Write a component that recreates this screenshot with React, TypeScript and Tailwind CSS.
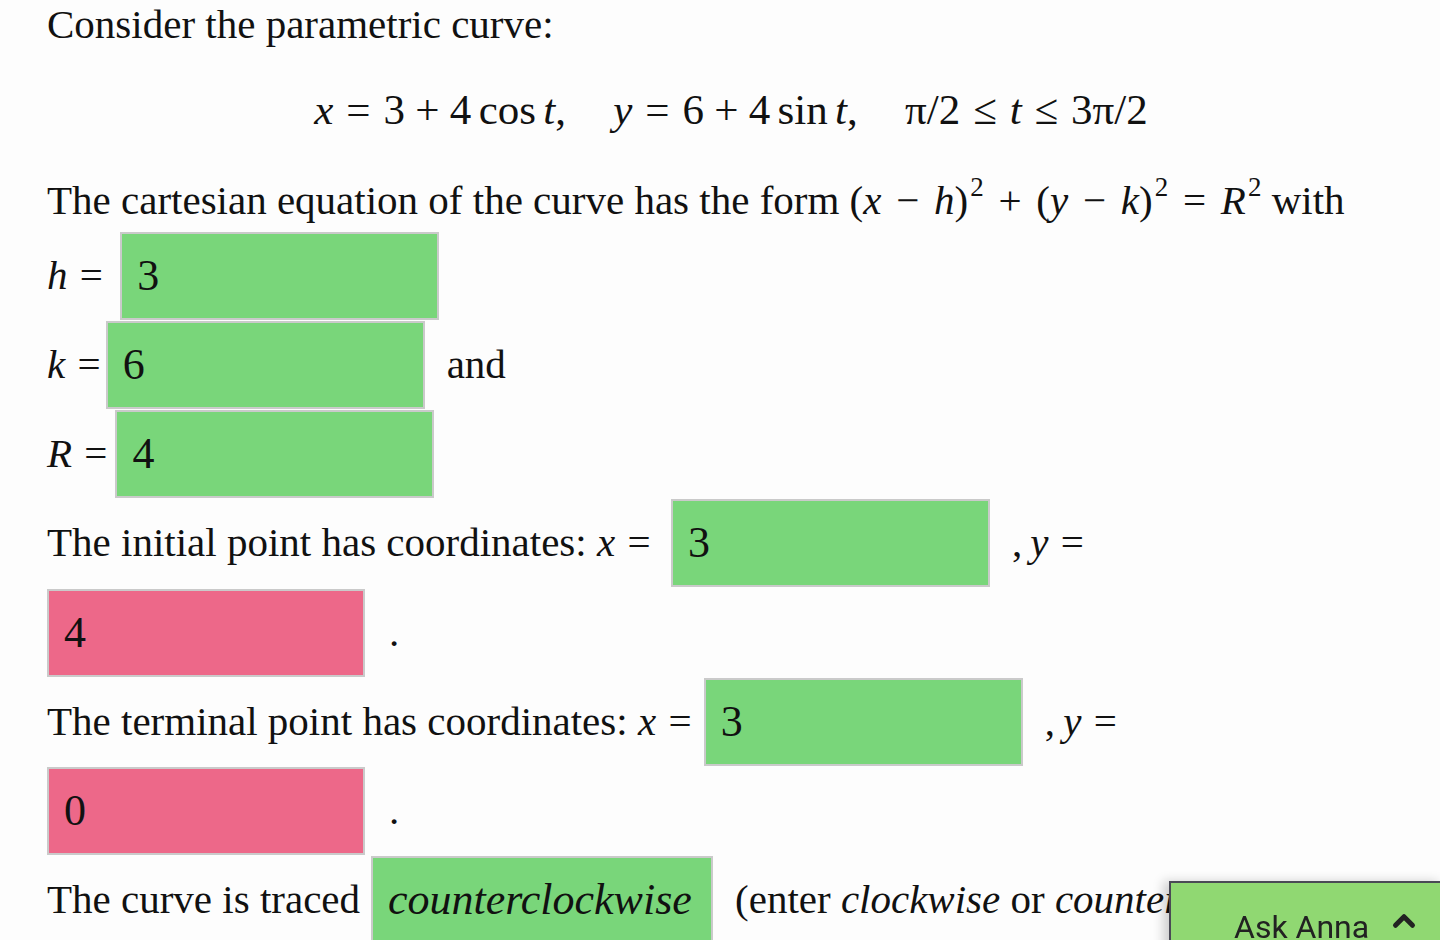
import { ChevronUp } from "lucide-react";

type Tone = "ok" | "bad";

function AnswerBox({ value, tone, italic, className = "" }: { value: string; tone: Tone; italic?: boolean; className?: string }) {
  const bg = tone === "ok" ? "bg-[#79d67a]" : "bg-[#ed6889]";
  return (
    <div
      className={`flex h-[88px] shrink-0 items-center border-2 border-[#cacaca] pl-[15px] text-[#111] ${bg} ${italic ? "text-[44px] italic" : "text-[44px]"} ${className}`}
    >
      {value}
    </div>
  );
}

// math variable
function V({ children }: { children: React.ReactNode }) {
  return <span className="italic">{children}</span>;
}

function Eq() {
  return <span className="mx-[0.3em]">=</span>;
}

function Op({ children }: { children: React.ReactNode }) {
  return <span className="mx-[0.24em]">{children}</span>;
}

function WideOp({ children }: { children: React.ReactNode }) {
  return <span className="mx-[0.36em]">{children}</span>;
}

export default function App() {
  return (
    <div className="min-h-screen overflow-hidden bg-[#fdfdfd] font-['Liberation_Serif',serif] text-[41px] text-[#111]">
      <div className="flex flex-col pl-[47px] pr-[25px]">
        {/* intro */}
        <div className="flex h-[50px] items-center whitespace-nowrap">Consider the parametric curve:</div>

        {/* display equation */}
        <div className="flex h-[120px] items-center justify-center whitespace-nowrap text-[43px]">
          <V>x</V>
          <Eq />
          3<Op>+</Op>4<span className="ml-[0.17em]">cos</span>
          <span className="ml-[0.17em]">
            <V>t</V>,
          </span>
          <span className="ml-[1.1em]">
            <V>y</V>
          </span>
          <Eq />
          6<Op>+</Op>4<span className="ml-[0.17em]">sin</span>
          <span className="ml-[0.17em]">
            <V>t</V>,
          </span>
          <span className="ml-[1.1em]">π/2</span>
          <span className="mx-[0.3em]">≤</span>
          <V>t</V>
          <span className="mx-[0.3em]">≤</span>3π/2
        </div>

        {/* cartesian form */}
        <div className="flex h-[61px] items-center whitespace-nowrap">
          The cartesian equation of the curve has the form&nbsp;(<V>x</V>
          <WideOp>−</WideOp>
          <V>h</V>)<sup className="ml-[2px] text-[27px]">2</sup>
          <WideOp>+</WideOp>(<V>y</V>
          <WideOp>−</WideOp>
          <V>k</V>)<sup className="ml-[2px] text-[27px]">2</sup>
          <WideOp>=</WideOp>
          <V>R</V>
          <sup className="ml-[2px] text-[27px]">2</sup>&nbsp;with
        </div>

        <div className="flex h-[89px] items-center whitespace-nowrap">
          <V>h</V>
          <Eq />
          <AnswerBox value="3" tone="ok" className="ml-[5px] w-[319px]" />
        </div>

        <div className="flex h-[89px] items-center whitespace-nowrap">
          <V>k</V>
          <span className="ml-[0.3em]">=</span>
          <AnswerBox value="6" tone="ok" className="ml-[5px] w-[319px]" />
          <span className="ml-[22px]">and</span>
        </div>

        <div className="flex h-[89px] items-center whitespace-nowrap">
          <V>R</V>
          <span className="ml-[0.3em]">=</span>
          <AnswerBox value="4" tone="ok" className="ml-[8px] w-[319px]" />
        </div>

        <div className="flex h-[90px] items-center whitespace-nowrap">
          The initial point has coordinates:&nbsp;<V>x</V>
          <Eq />
          <AnswerBox value="3" tone="ok" className="ml-[8px] w-[319px]" />
          <span className="ml-[22px]">,</span>
          <span className="ml-[0.2em]">
            <V>y</V>
          </span>
          <Eq />
        </div>

        <div className="flex h-[89px] items-center whitespace-nowrap">
          <AnswerBox value="4" tone="bad" className="w-[318px]" />
          <span className="ml-[24px]">.</span>
        </div>

        <div className="flex h-[89px] items-center whitespace-nowrap">
          The terminal point has coordinates:&nbsp;<V>x</V>
          <Eq />
          <AnswerBox value="3" tone="ok" className="w-[319px]" />
          <span className="ml-[22px]">,</span>
          <span className="ml-[0.2em]">
            <V>y</V>
          </span>
          <Eq />
        </div>

        <div className="flex h-[89px] items-center whitespace-nowrap">
          <AnswerBox value="0" tone="bad" className="w-[318px]" />
          <span className="ml-[24px]">.</span>
        </div>

        <div className="flex h-[89px] items-center whitespace-nowrap">
          The curve is traced
          <AnswerBox value="counterclockwise" tone="ok" italic className="ml-[11px] w-[342px]" />
          <span className="ml-[22px]">
            (enter <i>clockwise</i> or <i>counterclockwise</i>)
          </span>
        </div>
      </div>

      {/* floating help button */}
      <button className="fixed bottom-[-22px] right-[-4px] flex h-[81px] w-[275px] items-start border-l-2 border-t-2 border-[#4a4a55] bg-[#90d872] pl-[63px] pt-[20px] font-['Roboto',sans-serif] text-[32px] text-[#222] shadow-[-6px_0_10px_rgba(0,0,0,0.18)]">
        <span>Ask Anna</span>
        <ChevronUp className="ml-[18px] mt-[1px] h-[34px] w-[34px]" strokeWidth={3.5} />
      </button>
    </div>
  );
}
